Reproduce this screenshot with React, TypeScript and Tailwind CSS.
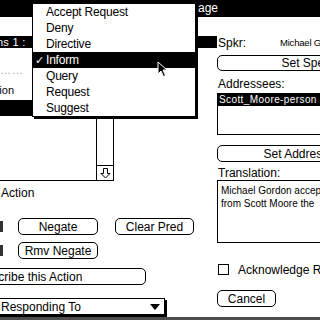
import React from 'react'

const acts = ['Accept Request', 'Deny', 'Directive', 'Inform', 'Query', 'Request', 'Suggest']

function Btn({ label, className = '' }: { label: string; className?: string }) {
  return (
    <div
      className={`h-[17px] flex items-center justify-center border border-black rounded-[5px] bg-white text-[12px] leading-none whitespace-nowrap ${className}`}
    >
      {label}
    </div>
  )
}

export default function App() {
  return (
    <div className="relative w-[320px] h-[320px] overflow-hidden bg-white text-black font-['Liberation_Sans',Arial,sans-serif]">
      {/* 标题栏 */}
      <div className="h-[17px] bg-black flex">
        <div className="w-[218px] text-right text-white text-[12px] leading-[17px] whitespace-nowrap">
          Message
        </div>
      </div>

      <div className="flex h-[300px]">
        {/* 左栏 */}
        <div className="w-[217px] shrink-0 flex flex-col">
          <div className="h-[19px]" />
          <div className="h-[12px] bg-black text-white text-[11px] leading-[12px] whitespace-nowrap">
            <span className="-ml-[29px] tracking-[0.3px]">Actions 1 :</span>
          </div>
          <div className="h-[52px] pt-[14px] flex flex-col gap-[4px] text-[11px]">
            <div className="h-[16px] flex items-center text-gray-400 tracking-[1px] leading-none">……</div>
            <div className="h-[16px] flex items-center leading-none whitespace-nowrap">
              <span className="-ml-[30px]">Question</span>
            </div>
          </div>

          {/* 列表 */}
          <div className="-ml-[1px] w-[115px] h-[81px] border border-black flex">
            <div className="flex-1">
              <div className="h-[15px] bg-black" />
            </div>
            <div className="w-[17px] border-l border-black flex flex-col justify-end">
              <div className="h-[15px] border-t border-black flex items-center justify-center">
                <svg width="11" height="11" viewBox="0 0 11 11">
                  <polygon points="3.5,0.5 7.5,0.5 7.5,5.5 10,5.5 5.5,10 1,5.5 3.5,5.5" fill="white" stroke="black" strokeWidth="1" />
                </svg>
              </div>
            </div>
          </div>

          <div className="mt-[5px] h-[14px] text-[12px] leading-[14px] pl-[1px]">Action</div>

          <div className="mt-[18px] flex items-center">
            <div className="-ml-[8px] w-[11px] h-[11px] bg-[#333] shrink-0" />
            <Btn label="Negate" className="ml-[15px] w-[80px]" />
            <Btn label="Clear Pred" className="ml-[17px] w-[79px]" />
          </div>
          <div className="mt-[7px] flex items-center">
            <div className="-ml-[8px] w-[11px] h-[11px] bg-[#333] shrink-0" />
            <Btn label="Rmv Negate" className="ml-[15px] w-[80px]" />
          </div>

          <Btn label="Describe this Action" className="mt-[9px] -ml-[28px] w-[174px] !justify-start pl-[4px]" />

          <div className="mt-[13px] -ml-[6px] w-[171px] h-[17px] border border-black bg-white shadow-[2px_2px_0_#000] flex items-center justify-between pl-[6px] pr-[4px] text-[12px] leading-none">
            <span>Responding To</span>
            <svg width="10" height="6" viewBox="0 0 10 6">
              <polygon points="0,0 10,0 5,6" fill="black" />
            </svg>
          </div>
        </div>

        {/* 右栏 */}
        <div className="flex-1 flex flex-col">
          <div className="mt-[19px] h-[14px] flex items-center text-[12px] leading-none pl-[1px]">
            <span className="w-[62px]">Spkr:</span>
            <span className="text-[9.5px] tracking-[-0.2px]">Michael Gordon</span>
          </div>
          <Btn label="Set Speaker" className="mt-[5px] !h-[16px] w-[195px] shrink-0" />
          <div className="mt-[6px] h-[14px] text-[12px] leading-[14px] pl-[1px]">Addressees:</div>
          <div className="mt-[2px] w-[120px] h-[42px] border border-black">
            <div className="h-[12px] bg-black text-white text-[10px] leading-[12px] pl-[1px] whitespace-nowrap tracking-[0.4px]">
              Scott_Moore-person
            </div>
          </div>
          <Btn label="Set Addressees" className="mt-[10px] w-[177px] shrink-0" />
          <div className="mt-[4px] h-[14px] text-[12px] leading-[14px] pl-[1px]">Translation:</div>
          <div className="w-[120px] h-[63px] border border-black pt-[3px] pl-[3px] text-[10px] leading-[13px] whitespace-nowrap">
            <div>Michael Gordon accepts</div>
            <div>from Scott Moore the</div>
          </div>
          <div className="mt-[19px] h-[15px] flex items-center text-[12px] leading-none whitespace-nowrap">
            <div className="ml-[1px] w-[11px] h-[11px] border border-black" />
            <span className="ml-[9px]">Acknowledge Request</span>
          </div>
          <Btn label="Cancel" className="mt-[13px] w-[59px]" />
        </div>
      </div>

      <div className="h-[3px] bg-[#4d4d4d]" />

      {/* 弹出菜单 */}
      <div className="absolute left-[32px] top-[3px] w-[164px] border border-black bg-white shadow-[2px_2px_0_#000] text-[12px]">
        {acts.map((a) => (
          <div
            key={a}
            className={`h-[16px] flex items-center leading-none whitespace-nowrap ${
              a === 'Inform' ? 'bg-black text-white' : ''
            }`}
          >
            <span className="w-[13px] pl-[2px] text-[11px]">{a === 'Inform' ? '✓' : ''}</span>
            <span className="tracking-[-0.2px]">{a}</span>
          </div>
        ))}
      </div>

      {/* 光标 */}
      <svg className="absolute left-[157px] top-[61px]" width="12" height="17" viewBox="0 0 12 17">
        <path d="M1 1 L1 13 L4 10 L6.5 15.5 L8.5 14.5 L6 9 L10 9 Z" fill="black" stroke="white" strokeWidth="1" />
      </svg>
    </div>
  )
}
